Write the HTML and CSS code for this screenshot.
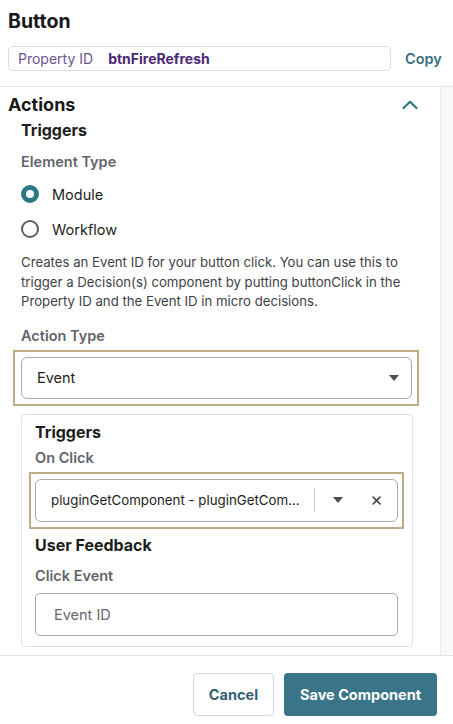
FILE: index.html
```html
<!DOCTYPE html>
<html>
<head>
<meta charset="utf-8">
<link rel="stylesheet" href="styles.css">
</head>
<body>
<div class="panel">
  <header class="top">
    <h1 class="title">Button</h1>
    <div class="prop-row">
      <div class="prop-box"><span class="prop-label">Property ID</span><span class="prop-value">btnFireRefresh</span></div>
      <span class="copy">Copy</span>
    </div>
  </header>
  <main class="main">
    <div class="content">
      <div class="section-head">
        <h2 class="section-title">Actions</h2>
        <svg class="chevron" width="16" height="9" viewBox="0 0 16 9"><path d="M1.5 8 L8 1.8 L14.5 8" fill="none" stroke="#2f7480" stroke-width="2.2" stroke-linecap="round" stroke-linejoin="round"/></svg>
      </div>
      <div class="section-body">
        <h3 class="sub">Triggers</h3>
        <div class="label lbl-element">Element Type</div>
        <div class="radio-row r1"><span class="radio checked"></span><span class="radio-text">Module</span></div>
        <div class="radio-row r2"><span class="radio"></span><span class="radio-text">Workflow</span></div>
        <p class="desc">Creates an Event ID for your button click. You can use this to trigger a Decision(s) component by putting buttonClick in the Property ID and the Event ID in micro decisions.</p>
        <div class="label lbl-action">Action Type</div>
        <div class="hl hl-action">
          <div class="select">
            <span class="select-text">Event</span>
            <svg class="caret" width="10" height="6" viewBox="0 0 10 6"><path d="M0 0 H10 L5 6 Z" fill="#4d4d4d"/></svg>
          </div>
        </div>
        <div class="card">
          <h3 class="sub">Triggers</h3>
          <div class="label lbl-onclick">On Click</div>
          <div class="hl hl-trigger">
            <div class="select select-multi">
              <span class="select-text trunc">pluginGetComponent - pluginGetCom...</span>
              <span class="divider"></span>
              <svg class="caret caret2" width="10" height="6" viewBox="0 0 10 6"><path d="M0 0 H10 L5 6 Z" fill="#4d4d4d"/></svg>
              <svg class="clear" width="11" height="11" viewBox="0 0 11 11"><path d="M1.5 1.5 L9.5 9.5 M9.5 1.5 L1.5 9.5" stroke="#4a4a4f" stroke-width="2" stroke-linecap="round"/></svg>
            </div>
          </div>
          <h3 class="sub sub-feedback">User Feedback</h3>
          <div class="label lbl-click">Click Event</div>
          <div class="input"><span class="placeholder">Event ID</span></div>
        </div>
      </div>
    </div>
    <div class="scrollbar"></div>
  </main>
  <footer class="footer">
    <button class="btn btn-cancel">Cancel</button>
    <button class="btn btn-save">Save Component</button>
  </footer>
</div>
</body>
</html>
```

FILE: styles.css
```css
* { box-sizing: border-box; }
html, body { margin: 0; padding: 0; background: #fff; }
body { font-family: Inter, "Noto Sans", sans-serif; color: #1d1d20; width: 453px; height: 724px; overflow: hidden; }
.panel { display: flex; flex-direction: column; height: 724px; }

.top { padding: 8px 8px 0 8px; border-bottom: 1px solid #e4e4e6; height: 87px; }
.title { margin: 0; font-size: 19.5px; font-weight: 700; line-height: 26px; color: #18181b; }
.prop-row { display: flex; align-items: center; margin-top: 12px; }
.prop-box { width: 383px; height: 25px; border: 1px solid #dcdce0; border-radius: 5px; display: flex; align-items: center; padding-left: 9px; font-size: 14px; }
.prop-label { color: #6d5491; }
.prop-value { color: #4b2a72; font-weight: 700; margin-left: 15px; }
.copy { margin-left: 14px; color: #336f7d; font-weight: 600; font-size: 14.5px; }

.main { display: flex; height: 568px; overflow: hidden; }
.content { flex: 1; padding: 6px 0 0 8px; }
.scrollbar { width: 13px; border-left: 1px solid #ececee; background: #f9f9fa; }

.section-head { display: flex; align-items: center; justify-content: space-between; width: 409px; height: 24px; }
.section-title { margin: 0; font-size: 18px; font-weight: 700; line-height: 24px; color: #18181b; }
.chevron { margin-right: -1px; margin-top: -2px; }

.section-body { padding-left: 13px; width: 405px; }
.sub { margin: 2px 0 0 0; font-size: 16px; font-weight: 700; line-height: 22px; color: #1d1d20; }
.label { font-size: 14.5px; font-weight: 600; line-height: 20px; color: #63646b; }
.lbl-element { margin-top: 11px; }
.radio-row { display: flex; align-items: center; height: 24px; font-size: 14.5px; color: #1d1d20; }
.r1 { margin-top: 10px; }
.r2 { margin-top: 11px; }
.radio { width: 18px; height: 18px; border-radius: 50%; border: 2px solid #5c5c63; display: inline-block; }
.radio.checked { border: 5px solid #2b7a83; background: #fff; }
.radio-text { margin-left: 13px; }
.desc { margin: 12px 0 0 0; font-size: 13.2px; line-height: 19.5px; color: #3e3f45; }
.lbl-action { margin-top: 14px; }

.hl { border: 2px solid #bcae82; }
.hl-action { margin: 4px -6px 0 -8px; padding: 5px 5px 5px 6px; }
.select { height: 42px; border: 1px solid #a9a9ae; border-radius: 6px; display: flex; align-items: center; padding: 0 12px 0 15px; font-size: 14.5px; color: #1d1d20; }
.select-text { flex: 1; }
.caret { flex: none; }

.card { margin-top: 8px; border: 1px solid #e3e3e6; border-radius: 4px; padding: 5px 14px 10px 13px; }
.card .sub { margin-top: 1px; }
.lbl-onclick { margin-top: 5px; }
.hl-trigger { margin: 4px -6px 0 -6px; padding: 5px 4px; }
.select-multi { padding: 0 16px 0 15px; height: 43px; }
.trunc { flex: none; width: 249px; white-space: nowrap; font-size: 13.3px; }
.divider { width: 1px; height: 24px; background: #cfcfd3; margin-left: 14px; }
.caret2 { margin-left: 18px; }
.clear { margin-left: 29px; }
.sub-feedback { margin-top: 5px !important; }
.lbl-click { margin-top: 10px; }
.input { margin-top: 7px; height: 43px; border: 1px solid #a9a9ae; border-radius: 5px; display: flex; align-items: center; padding-left: 18px; font-size: 14.5px; }
.placeholder { color: #66676d; }

.footer { border-top: 1px solid #e4e4e6; display: flex; justify-content: flex-end; gap: 10px; padding: 17px 16px 0 0; flex: 1; }
.btn { height: 43px; border-radius: 4px; font-family: Inter, "Noto Sans", sans-serif; font-size: 14.5px; font-weight: 700; cursor: pointer; }
.btn-cancel { width: 81px; background: #fff; border: 1.5px solid #cfd9de; color: #335f6e; }
.btn-save { width: 153px; background: #3a7489; border: none; color: #fff; }
```
